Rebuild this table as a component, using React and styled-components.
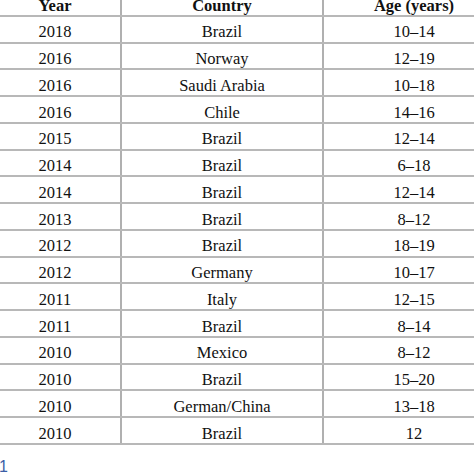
import styled, { createGlobalStyle } from "styled-components";

const GlobalStyle = createGlobalStyle`
  body {
    margin: 0;
    background: #ffffff;
    overflow: hidden;
  }
`;

const StyledPage = styled.div`
  width: 474px;
  height: 474px;
  overflow: hidden;
  background: #ffffff;
`;

const StyledTable = styled.div`
  width: 514px;
  margin: -10px 0 0 -10px;
  font-family: "Liberation Serif", "Times New Roman", serif;
  font-size: 16.5px;
  color: #111111;
`;

const StyledRow = styled.div`
  display: grid;
  grid-template-columns: 132px 202px 180px;
  height: 26.75px;
  box-sizing: border-box;
  border-bottom: 2px solid #b8b8b8;
  font-weight: ${(props) => (props.$head ? 700 : 400)};
`;

const StyledCell = styled.div`
  display: flex;
  align-items: center;
  justify-content: center;
  padding-top: 7px;
  line-height: 1;
  border-right: ${(props) => (props.$last ? "none" : "2px solid #b0b0b0")};
`;

const StyledLink = styled.a`
  display: block;
  margin: 13px 0 0 -1px;
  font-family: "Liberation Sans", Arial, sans-serif;
  font-size: 16px;
  color: #3b5ea6;
  text-decoration: none;
`;

const rows = [
  ["2018", "Brazil", "10–14"],
  ["2016", "Norway", "12–19"],
  ["2016", "Saudi Arabia", "10–18"],
  ["2016", "Chile", "14–16"],
  ["2015", "Brazil", "12–14"],
  ["2014", "Brazil", "6–18"],
  ["2014", "Brazil", "12–14"],
  ["2013", "Brazil", "8–12"],
  ["2012", "Brazil", "18–19"],
  ["2012", "Germany", "10–17"],
  ["2011", "Italy", "12–15"],
  ["2011", "Brazil", "8–14"],
  ["2010", "Mexico", "8–12"],
  ["2010", "Brazil", "15–20"],
  ["2010", "German/China", "13–18"],
  ["2010", "Brazil", "12"],
];

export default function App() {
  return (
    <>
      <GlobalStyle />
      <StyledPage>
        <StyledTable>
          <StyledRow $head>
            <StyledCell>Year</StyledCell>
            <StyledCell>Country</StyledCell>
            <StyledCell $last>Age (years)</StyledCell>
          </StyledRow>
          {rows.map(([year, country, age], i) => (
            <StyledRow key={i}>
              <StyledCell>{year}</StyledCell>
              <StyledCell>{country}</StyledCell>
              <StyledCell $last>{age}</StyledCell>
            </StyledRow>
          ))}
        </StyledTable>
        <StyledLink href="#">1</StyledLink>
      </StyledPage>
    </>
  );
}
